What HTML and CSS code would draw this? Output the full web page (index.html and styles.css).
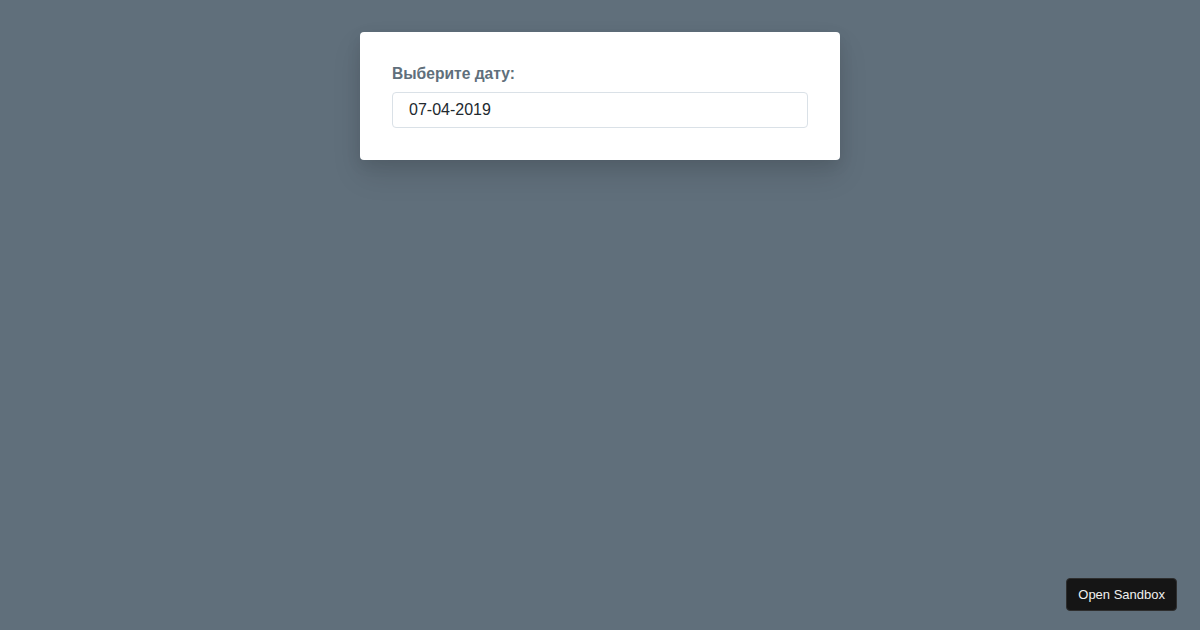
FILE: index.html
```html
<!DOCTYPE html>
<html lang="ru">
<head>
<meta charset="utf-8">
<title>Date</title>
<link rel="stylesheet" href="styles.css">
</head>
<body>
<main class="page">
  <div class="card">
    <label class="label" for="date">Выберите дату:</label>
    <input class="input" id="date" type="text" value="07-04-2019">
  </div>
</main>
<a class="sandbox" href="#">Open Sandbox</a>
</body>
</html>
```
FILE: styles.css
```css
html, body {
  margin: 0;
  height: 100%;
}
body {
  background: #606f7b;
  font-family: "Liberation Sans", Arial, sans-serif;
}
.page {
  padding: 32px;
  display: flex;
  justify-content: center;
}
.card {
  width: 480px;
  box-sizing: border-box;
  background: #fff;
  border-radius: 4px;
  padding: 32px;
  box-shadow: 0 15px 30px 0 rgba(0,0,0,0.11), 0 5px 15px 0 rgba(0,0,0,0.08);
  display: flex;
  flex-direction: column;
}
.label {
  display: block;
  color: #606f7b;
  font-size: 15.6px;
  font-weight: bold;
  line-height: 20px;
  margin-top: 0;
  margin-bottom: 8px;
}
.input {
  box-sizing: border-box;
  width: 100%;
  height: 36px;
  border: 1px solid #dae1e7;
  border-radius: 4px;
  padding: 0 16px;
  font-family: "Liberation Sans", Arial, sans-serif;
  font-size: 16px;
  color: #22292f;
  outline: none;
  background: #fff;
}
.sandbox {
  position: fixed;
  right: 23px;
  bottom: 19px;
  height: 33px;
  box-sizing: border-box;
  padding: 0 11px;
  display: flex;
  align-items: center;
  background: #151515;
  border: 1px solid #2e2e2e;
  border-radius: 4px;
  color: #f0f0f0;
  font-size: 13px;
  text-decoration: none;
}
```
